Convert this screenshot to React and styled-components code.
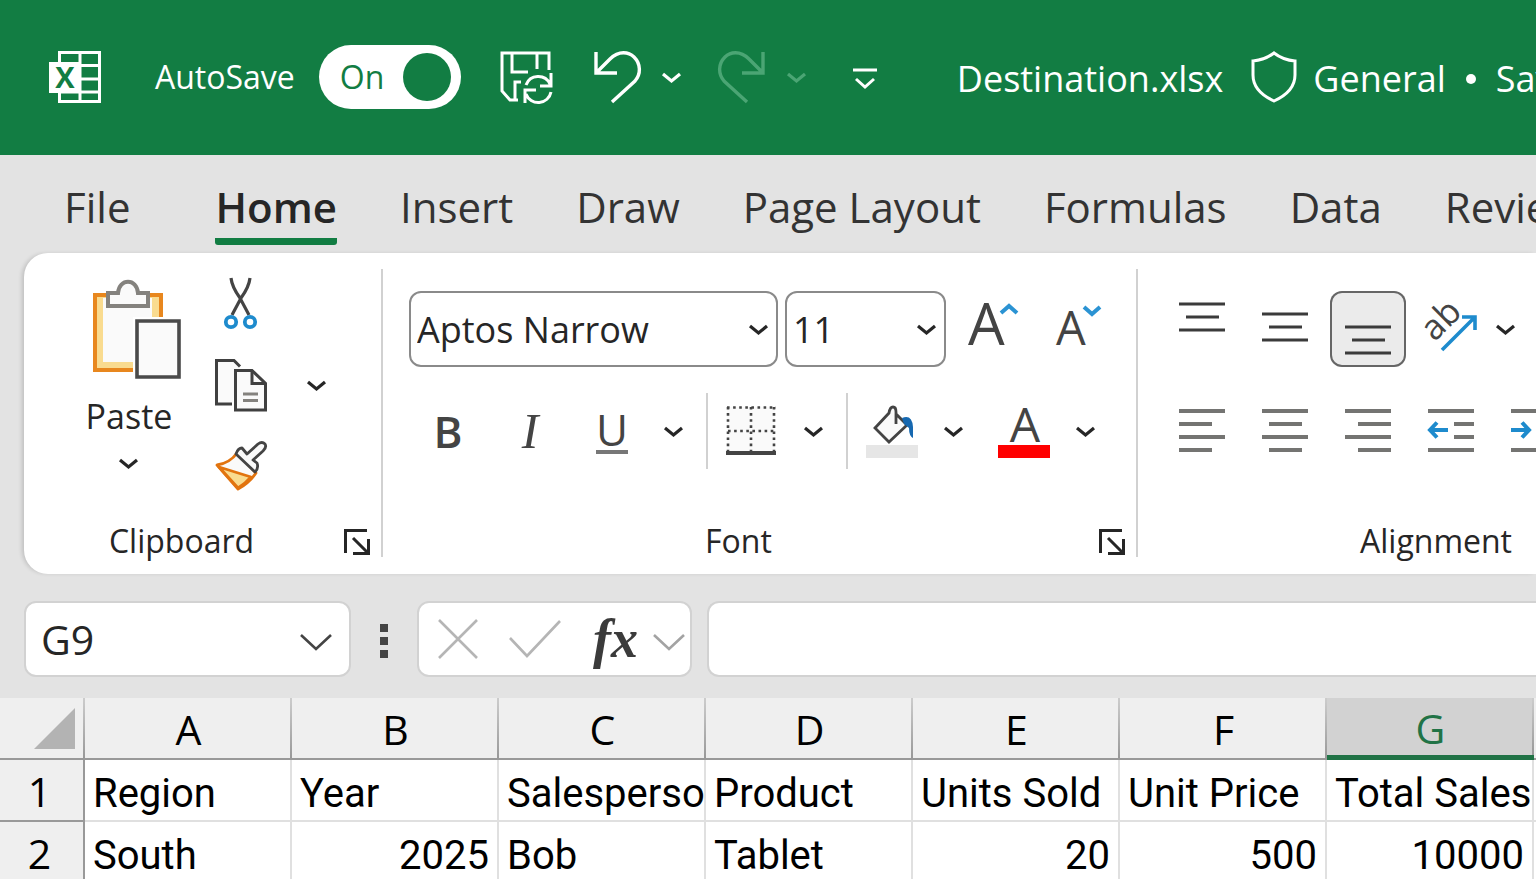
import React from 'react';
import styled, { createGlobalStyle } from 'styled-components';

const GlobalStyle = createGlobalStyle`
	* {
		box-sizing: border-box;
	}
	body {
		margin: 0;
		background: #e3e3e3;
		color: #262626;
		font-family: 'Open Sans', 'Noto Sans', sans-serif;
	}
	button, input, select {
		margin: 0;
		padding: 0;
		border: 0;
		background: none;
		color: inherit;
		font-family: inherit;
	}
	svg {
		display: block;
		flex: none;
		overflow: visible;
	}
`;

const Page = styled.div`
	display: flex;
	flex-direction: column;
	height: 100vh;
	overflow: hidden;
`;

/* title bar */

const TitleBar = styled.header`
	display: flex;
	flex: none;
	align-items: center;
	height: 155px;
	padding: 0 0 1px 49px;
	background: #127d43;
	color: white;
	white-space: nowrap;
`;

const AutoSave = styled.label`
	display: flex;
	align-items: center;
	gap: 24px;
	margin: 0 38px 0 54px;
	font-size: 32px;
	line-height: 44px;
`;

const Switch = styled.span`
	position: relative;
	display: flex;
	align-items: center;
	justify-content: space-between;
	width: 142px;
	height: 64px;
	padding: 0 10px 0 21px;
	border-radius: 32px;
	background: white;
	color: #127d43;
	input {
		position: absolute;
		inset: 0;
		opacity: 0;
	}
`;

const Knob = styled.span`
	width: 48px;
	height: 48px;
	border-radius: 50%;
	background: #127d43;
`;

const QuickAccess = styled.div`
	display: flex;
	align-items: center;
	gap: 36px;
`;

const Split = styled.div`
	display: flex;
	align-items: center;
	gap: ${(props) => props.$gap || 26}px;
`;

const IconButton = styled.button`
	display: flex;
	flex: none;
	align-items: center;
	justify-content: center;
	width: ${(props) => props.$width || 52}px;
	color: ${(props) => props.$color || 'inherit'};
`;

const FileInfo = styled.div`
	display: flex;
	align-items: center;
	margin-left: 70px;
	font-size: 36px;
	line-height: 48px;
	span {
		padding-top: 4px;
	}
	svg {
		margin: 0 16px 0 28px;
	}
`;

const Dot = styled.i`
	flex: none;
	width: 10px;
	height: 10px;
	margin: 4px 20px 0;
	border-radius: 50%;
	background: white;
`;

/* ribbon */

const Tabs = styled.nav`
	display: flex;
	flex: none;
	gap: 63px;
	height: 98px;
	padding: 24px 0 8px 64px;
	white-space: nowrap;
`;

const Tab = styled.a`
	height: 66px;
	margin-right: ${(props) => (props.$first ? 22 : 0)}px;
	border-bottom: 7px solid ${(props) => (props.$active ? '#127d43' : 'transparent')};
	border-radius: 3px;
	color: ${(props) => (props.$active ? '#262626' : '#333')};
	font-size: 42px;
	font-weight: ${(props) => (props.$active ? 600 : 400)};
	line-height: 56px;
	text-decoration: none;
`;

const Ribbon = styled.section`
	display: flex;
	flex: none;
	height: 321px;
	margin-left: 24px;
	padding: 16px 0 17px;
	border-radius: 24px 0 0 24px;
	background: white;
	box-shadow: -3px 0 4px -1px rgba(0, 0, 0, 0.16);
`;

const Group = styled.div`
	display: flex;
	flex: none;
	flex-direction: column;
	justify-content: space-between;
	min-width: ${(props) => props.$width}px;
	border-right: 2px solid #d1d1d1;
`;

const GroupFooter = styled.div`
	display: flex;
	align-items: center;
	padding-right: 6px;
	font-size: 32px;
	line-height: 32px;
	span {
		flex: 1;
		text-align: center;
	}
`;

const ClipboardTools = styled.div`
	display: flex;
	gap: 33px;
	padding: 7px 0 0 52px;
`;

const PasteButton = styled.button`
	display: flex;
	flex-direction: column;
	align-items: center;
	gap: 12px;
	padding-top: 4px;
	font-size: 34px;
	line-height: 48px;
	svg:last-child {
		margin-top: 4px;
	}
`;

const SmallTools = styled.div`
	display: grid;
	grid-template-columns: 52px 20px;
	grid-auto-rows: 54px;
	gap: 28px 40px;
`;

const ToolRows = styled.div`
	display: flex;
	flex-direction: column;
	gap: 26px;
	padding: 22px 0 0 26px;
`;

const ToolRow = styled.div`
	display: flex;
	align-items: center;
	gap: ${(props) => props.$gap}px;
	height: 76px;
	padding-left: ${(props) => props.$indent || 0}px;
`;

const Divider = styled.span`
	flex: none;
	width: 2px;
	height: 76px;
	margin: 0 18px 0 22px;
	background: #d1d1d1;
`;

const SelectBox = styled.div`
	position: relative;
	width: ${(props) => props.$width}px;
	margin-right: ${(props) => props.$after}px;
	select {
		width: 100%;
		height: 76px;
		padding-left: 6px;
		border: 2px solid #8a8a8a;
		border-radius: 12px;
		appearance: none;
		font-size: 36px;
	}
	svg {
		position: absolute;
		top: 31px;
		right: 9px;
		pointer-events: none;
	}
`;

const LetterButton = styled(IconButton)`
	color: #444;
	font-size: 44px;
	line-height: 42px;
	span {
		border-bottom: ${(props) => (props.$underline ? '4px solid #777' : '0')};
	}
`;

const Bold = styled(LetterButton)`
	font-weight: 600;
`;

const Italic = styled(LetterButton)`
	font-family: 'Liberation Serif', serif;
	font-size: 50px;
	font-style: italic;
`;

const AlignButton = styled.button`
	flex: none;
	width: 76px;
	height: 76px;
	border-radius: 12px;
	background: ${(props) => (props.$pressed ? '#ebebeb' : 'none')};
	box-shadow: ${(props) => (props.$pressed ? 'inset 0 0 0 2px #666' : 'none')};
`;

/* formula bar */

const FormulaBar = styled.div`
	display: flex;
	flex: none;
	align-items: center;
	height: 124px;
	padding: 5px 0 0 24px;
`;

const Field = styled.div`
	display: flex;
	align-items: center;
	width: ${(props) => props.$width}px;
	height: 76px;
	padding: 0 ${(props) => props.$pad || 0}px;
	border: 2px solid #d2d2d2;
	border-radius: 12px;
	background: white;
`;

const NameInput = styled.input`
	flex: 1;
	min-width: 0;
	font-size: 41px;
`;

const FormulaField = styled(Field)`
	flex: 1;
	margin-left: 15px;
	border-right: 0;
	border-radius: 12px 0 0 12px;
	input {
		width: 100%;
		font-size: 41px;
	}
`;

const Grip = styled.div`
	display: grid;
	gap: 5px;
	margin: 4px 29px 0;
	span {
		width: 8px;
		height: 8px;
		background: #444;
	}
`;

const FxButton = styled.button`
	width: 44px;
	margin: 0 16px;
	color: #3b3b3b;
	font-family: 'Liberation Serif', serif;
	font-size: 54px;
	font-style: italic;
	font-weight: 700;
	line-height: 60px;
`;

/* sheet */

const Sheet = styled.table`
	flex: none;
	width: 1741px;
	border-collapse: separate;
	border-spacing: 0;
	table-layout: fixed;
	font-family: Roboto, sans-serif;
	font-size: 40px;
	line-height: 60px;
`;

const Corner = styled.th`
	width: 85px;
	padding: 0 10px 0 0;
	border-bottom: 2px solid #999;
	background: linear-gradient(#ccc, #999) right / 2px 100% no-repeat #efefef;
	svg {
		margin-left: auto;
	}
`;

const ColumnHead = styled.th`
	height: 62px;
	padding: ${(props) => (props.$selected ? 3 : 2)}px 0 0;
	border-bottom: ${(props) => (props.$selected ? '5px solid #217346' : '2px solid #999')};
	background: linear-gradient(#ccc, #999) right / 2px 100% no-repeat
		${(props) => (props.$selected ? '#d2d2d2' : '#efefef')};
	color: ${(props) => (props.$selected ? '#217346' : '#000')};
	font-family: 'Open Sans', sans-serif;
	font-size: 41px;
	font-weight: 400;
	line-height: 54px;
`;

const RowHead = styled.th`
	padding: 2px 4px 0 0;
	border-right: 2px solid #999;
	border-bottom: 2px solid #999;
	background: #efefef;
	color: #000;
	font-family: 'Open Sans', sans-serif;
	font-size: 41px;
	font-weight: 400;
	line-height: 56px;
`;

const Cell = styled.td`
	height: 62px;
	padding: 8px 8px 0;
	border-right: 2px solid #e0e0e0;
	border-bottom: 2px solid #e0e0e0;
	background: white;
	color: #000;
	line-height: 52px;
	overflow: hidden;
	text-align: ${(props) => (props.$number ? 'right' : 'left')};
	white-space: nowrap;
`;

/* icons */

const Chevron = ({ color = 'currentColor' }) => (
	<svg width="20" height="14" fill="none" stroke={color} strokeWidth="3.2">
		<path d="M1 4 9.500 11 18 4" />
	</svg>
);

const WideChevron = ({ color }) => (
	<svg width="32" height="24" fill="none" stroke={color} strokeWidth="2.6">
		<path d="M1 8 16 22 31 8" />
	</svg>
);

const ExcelLogo = () => (
	<svg width="52" height="52" viewBox="0 0 52 52">
		<path
			d="M10.500 1.500H50.500V50.500H10.500ZM31 1V51M10 14.500H51M10 28H51M10 41H51"
			fill="none"
			stroke="white"
			strokeWidth="3"
		/>
		<path d="M0 11H30V42H0Z" fill="white" />
		<text x="16" y="37" fill="#127d43" fontSize="29" fontWeight="700" textAnchor="middle">
			X
		</text>
	</svg>
);

const SaveIcon = () => (
	<svg width="58" height="52" viewBox="-1 0 58 52" fill="none" stroke="white" strokeWidth="3">
		<path d="M49 19V2H2v38l8 9h8M12 2v19h16M37 2v16M15 49V31h6" />
		<path d="M26 34a13 13 0 0 1 24-1M51 22v13H40M51 41a13 13 0 0 1-25 2M25 52V39h11" />
	</svg>
);

const UndoIcon = () => (
	<svg width="48" height="52" fill="none" stroke="currentColor" strokeWidth="3.4">
		<path d="M3 1v21h21M3 22 17 8C26-1 36 1 41 6c7 7 7 17 1 24L19 51" />
	</svg>
);

const RedoIcon = () => (
	<svg width="48" height="52" fill="none" stroke="currentColor" strokeWidth="3.4">
		<path d="M45 1v21H24M45 22 31 8C22-1 12 1 7 6c-7 7-7 17-1 24l23 21" />
	</svg>
);

const CustomizeIcon = () => (
	<svg width="24" height="20" fill="none" stroke="white" strokeWidth="3">
		<path d="M0 3H24M3 12l9 8 9-8" />
	</svg>
);

const ShieldIcon = () => (
	<svg width="46" height="52" fill="none" stroke="white" strokeWidth="3">
		<path d="M23 2Q14 9 2 10V24C2 37 12 45 23 50 34 45 44 37 44 24V10Q32 9 23 2Z" />
	</svg>
);

const PasteIcon = () => (
	<svg width="106" height="100" viewBox="-16 0 106 100">
		<path d="M3 15H69V90H3Z" fill="#f9db8f" stroke="#e8871e" strokeWidth="4" />
		<path d="M11 18H60V82H11Z" fill="#fafafa" />
		<path
			d="M16 13H26C27-2 45-2 46 13H56V26H16Z"
			fill="#fafafa"
			stroke="#84827e"
			strokeWidth="4"
		/>
		<path d="M41 37H90V100H41Z" fill="white" />
		<path d="M45 41H87V97H45Z" fill="#fafafa" stroke="#4a4a4a" strokeWidth="3.6" />
	</svg>
);

const CutIcon = () => (
	<svg width="52" height="54" fill="none" strokeWidth="3.2">
		<path d="M16 2q1 9 9 20l9 17M35 2q-1 9-9 20l-9 17" stroke="#444" />
		<g stroke="#1e8bcd" strokeWidth="3.800">
			<circle cx="16" cy="46" r="5.200" />
			<circle cx="35" cy="46" r="5.200" />
		</g>
	</svg>
);

const CopyIcon = () => (
	<svg width="52" height="54" fill="none" stroke="#404040" strokeWidth="3">
		<path d="M17 46H1.500V2.500H19l6 6" fill="#fafafa" />
		<path d="M20.500 12.500H37l13.500 13V52h-30z" fill="#fafafa" />
		<path d="M37 12V25.500H50" />
		<path d="M28 36H43M28 42.500H43" stroke="#84827e" />
	</svg>
);

const PainterIcon = () => (
	<svg width="52" height="54" fill="none" strokeWidth="2.800" strokeLinejoin="round">
		<path d="M2 25Q15 23 22 13L41 33Q34 43 23 49Z" fill="#fafafa" stroke="#e2740f" />
		<path d="M4 27 36 37Q31 43 23 48Z" fill="#f9db8f" stroke="#e2740f" />
		<path
			d="M21 14Q23 8 27 8L32 14 43 4Q47 1 50 4 52 7 48 11L38 20 42 23Q44 28 40 32Z"
			fill="#fafafa"
			stroke="#444"
		/>
	</svg>
);

const LauncherIcon = () => (
	<svg width="26" height="24" fill="none" stroke="#262626" strokeWidth="3">
		<path d="M23 1.500H1.500V24M9 9 24 24M24.500 10V24.500H9" />
	</svg>
);

const GrowFontIcon = () => (
	<svg width="52" height="60">
		<text x="0" y="46" fill="#444" fontSize="58">
			A
		</text>
		<path d="M33 14l8-7 8 7" fill="none" stroke="#2b93d3" strokeWidth="4" />
	</svg>
);

const ShrinkFontIcon = () => (
	<svg width="52" height="60">
		<text x="0" y="46" fill="#444" fontSize="47">
			A
		</text>
		<path d="M28 8l8 7 8-7" fill="none" stroke="#2b93d3" strokeWidth="4" />
	</svg>
);

const BorderIcon = () => (
	<svg width="52" height="50" fill="none" stroke="#444" strokeWidth="2.600">
		<path d="M1 1H49V46H1Z" fill="#fafafa" stroke="none" />
		<path d="M1 1.500H50M2 25H50M2 1V46M25 1V46M48 1V46" strokeDasharray="2.600 3.500" />
		<path d="M0 47H50" strokeWidth="4" />
	</svg>
);

const FillIcon = () => (
	<svg width="52" height="52" fill="none">
		<path
			d="M9 23 23 8Q24 2 27 2 30 2 30 7V19L30 9 41 20 23 37Z"
			fill="#fafafa"
			stroke="#444"
			strokeWidth="2.800"
		/>
		<path d="M36 13Q46 9 47 22V33Q43 31 43 23L38 19Z" fill="#1668b0" />
		<path d="M0 40H52V53H0Z" fill="#e6e6e6" />
	</svg>
);

const FontColorIcon = () => (
	<svg width="52" height="52">
		<text x="27" y="37" fill="#444" fontSize="48" textAnchor="middle">
			A
		</text>
		<path d="M0 40H52V53H0Z" fill="red" />
	</svg>
);

const Lines = ({ d, thin, arrow }) => (
	<svg width="76" height="76" fill="none" stroke={thin ? '#3b3b3b' : '#747472'} strokeWidth={thin ? 3 : 4}>
		<path d={d} />
		{arrow && <path d={arrow} stroke="#1e8bcd" />}
	</svg>
);

const OrientationIcon = () => (
	<svg width="76" height="76" fill="none">
		<text
			fill="#444"
			fontSize="35"
			fontWeight="500"
			textAnchor="middle"
			transform="translate(36 37) rotate(-45)"
		>
			ab
		</text>
		<path d="M29 59 62 26M49 26H62V39" stroke="#1e8bcd" strokeWidth="3.600" />
	</svg>
);

const Caret = ({ label, color }) => (
	<IconButton $width={20} $color={color} aria-label={label}>
		<Chevron />
	</IconButton>
);

const tabs = ['File', 'Home', 'Insert', 'Draw', 'Page Layout', 'Formulas', 'Data', 'Review'];
const columns = ['A', 'B', 'C', 'D', 'E', 'F', 'G', ''];
const rows = [
	['Region', 'Year', 'Salesperson', 'Product', 'Units Sold', 'Unit Price', 'Total Sales', ''],
	['South', 2025, 'Bob', 'Tablet', 20, 500, 10000, ''],
];

const verticalAlign = [
	{ label: 'Top align', d: 'M15 13H61M22 26H55M15 39H61' },
	{ label: 'Middle align', d: 'M15 23H61M22 36H55M15 49H61' },
	{ label: 'Bottom align', d: 'M15 36H61M22 49H55M15 62H61', pressed: true },
];

const horizontalAlign = [
	{ label: 'Align left', d: 'M15 18H61M15 31H48M15 44H61M15 57H48' },
	{ label: 'Center', d: 'M15 18H61M22 31H55M15 44H61M22 57H55' },
	{ label: 'Align right', d: 'M15 18H61M28 31H61M15 44H61M28 57H61' },
	{
		label: 'Decrease indent',
		d: 'M15 18H61M41 31H61M41 44H61M15 57H61',
		arrow: 'M35 37H17M24 29.500L17 37l7 7.500',
	},
	{
		label: 'Increase indent',
		d: 'M15 18H61M41 31H61M41 44H61M15 57H61',
		arrow: 'M15 37H33M26 29.500L33 37l-7 7.500',
	},
];

const App = () => {
	return (
		<Page>
			<GlobalStyle />
			<TitleBar>
				<ExcelLogo />
				<AutoSave>
					AutoSave
					<Switch>
						<input type="checkbox" defaultChecked />
						On
						<Knob />
					</Switch>
				</AutoSave>
				<QuickAccess>
					<IconButton $width={58} aria-label="Save">
						<SaveIcon />
					</IconButton>
					<Split $gap={21}>
						<IconButton $width={48} aria-label="Undo">
							<UndoIcon />
						</IconButton>
						<Caret label="Undo history" />
					</Split>
					<Split $gap={21}>
						<IconButton $width={48} $color="#4ba574" aria-label="Redo">
							<RedoIcon />
						</IconButton>
						<Caret label="Redo history" color="#4ba574" />
					</Split>
					<IconButton $width={44} aria-label="Customize toolbar">
						<CustomizeIcon />
					</IconButton>
				</QuickAccess>
				<FileInfo>
					<span>Destination.xlsx</span>
					<ShieldIcon />
					<span>General</span>
					<Dot />
					<span>Saved</span>
				</FileInfo>
			</TitleBar>

			<Tabs>
				{tabs.map((tab, i) => (
					<Tab key={tab} href="#" $first={i === 0} $active={tab === 'Home'}>
						{tab}
					</Tab>
				))}
			</Tabs>

			<Ribbon>
				<Group $width={359}>
					<ClipboardTools>
						<PasteButton>
							<PasteIcon />
							Paste
							<Chevron />
						</PasteButton>
						<SmallTools>
							<IconButton aria-label="Cut">
								<CutIcon />
							</IconButton>
							<span />
							<IconButton aria-label="Copy">
								<CopyIcon />
							</IconButton>
							<Caret label="Copy options" />
							<IconButton aria-label="Format painter">
								<PainterIcon />
							</IconButton>
						</SmallTools>
					</ClipboardTools>
					<GroupFooter>
						<span>Clipboard</span>
						<IconButton $width={36} aria-label="Clipboard settings">
							<LauncherIcon />
						</IconButton>
					</GroupFooter>
				</Group>

				<Group $width={755}>
					<ToolRows>
						<ToolRow $gap={0}>
							<SelectBox $width={369} $after={7}>
								<select aria-label="Font name">
									<option>Aptos Narrow</option>
								</select>
								<Chevron />
							</SelectBox>
							<SelectBox $width={161} $after={22}>
								<select aria-label="Font size">
									<option>11</option>
								</select>
								<Chevron />
							</SelectBox>
							<Split $gap={36}>
								<IconButton aria-label="Increase font size">
									<GrowFontIcon />
								</IconButton>
								<IconButton aria-label="Decrease font size">
									<ShrinkFontIcon />
								</IconButton>
							</Split>
						</ToolRow>
						<ToolRow $gap={0} $indent={13}>
							<Split $gap={30}>
								<Bold>
									<span>B</span>
								</Bold>
								<Italic>
									<span>I</span>
								</Italic>
								<Split>
									<LetterButton $underline>
										<span>U</span>
									</LetterButton>
									<Caret label="Underline styles" />
								</Split>
							</Split>
							<Divider />
							<Split>
								<IconButton aria-label="Borders">
									<BorderIcon />
								</IconButton>
								<Caret label="Border styles" />
							</Split>
							<Divider />
							<Split $gap={34}>
								<Split>
									<IconButton aria-label="Fill color">
										<FillIcon />
									</IconButton>
									<Caret label="Fill colors" />
								</Split>
								<Split>
									<IconButton aria-label="Font color">
										<FontColorIcon />
									</IconButton>
									<Caret label="Font colors" />
								</Split>
							</Split>
						</ToolRow>
					</ToolRows>
					<GroupFooter>
						<span>Font</span>
						<IconButton $width={36} aria-label="Font settings">
							<LauncherIcon />
						</IconButton>
					</GroupFooter>
				</Group>

				<Group $width={604}>
					<ToolRows>
						<ToolRow $gap={7}>
							{verticalAlign.map(({ label, d, pressed }) => (
								<AlignButton key={label} aria-label={label} $pressed={pressed}>
									<Lines d={d} thin />
								</AlignButton>
							))}
							<AlignButton aria-label="Orientation">
								<OrientationIcon />
							</AlignButton>
							<Caret label="Orientation options" />
						</ToolRow>
						<ToolRow $gap={7}>
							{horizontalAlign.map(({ label, d, arrow }) => (
								<AlignButton key={label} aria-label={label}>
									<Lines d={d} arrow={arrow} />
								</AlignButton>
							))}
						</ToolRow>
					</ToolRows>
					<GroupFooter>
						<span>Alignment</span>
					</GroupFooter>
				</Group>
			</Ribbon>

			<FormulaBar>
				<Field $width={327} $pad={15}>
					<NameInput aria-label="Name box" defaultValue="G9" />
					<IconButton $width={36} aria-label="Names">
						<WideChevron color="#444" />
					</IconButton>
				</Field>
				<Grip>
					<span />
					<span />
					<span />
				</Grip>
				<Field $width={275} $pad={4}>
					<IconButton $width={70} aria-label="Cancel">
						<svg width="40" height="40" fill="none" stroke="#b5b5b5" strokeWidth="2.600">
							<path d="M1 1 39 39M39 1 1 39" />
						</svg>
					</IconButton>
					<IconButton $width={84} aria-label="Enter">
						<svg width="52" height="38" fill="none" stroke="#b5b5b5" strokeWidth="2.600">
							<path d="M1 18 18 36 51 1" />
						</svg>
					</IconButton>
					<FxButton>fx</FxButton>
					<IconButton $width={32} aria-label="Functions">
						<WideChevron color="#a3a3a3" />
					</IconButton>
				</Field>
				<FormulaField>
					<input aria-label="Formula" />
				</FormulaField>
			</FormulaBar>

			<Sheet>
				<thead>
					<tr>
						<Corner>
							<svg width="41" height="41" fill="#b3b3b3">
								<path d="M41 0V41H0Z" />
							</svg>
						</Corner>
						{columns.map((column) => (
							<ColumnHead key={column} $selected={column === 'G'}>
								{column}
							</ColumnHead>
						))}
					</tr>
				</thead>
				<tbody>
					{rows.map((row, i) => (
						<tr key={row[0]}>
							<RowHead scope="row">{i + 1}</RowHead>
							{row.map((value, j) => (
								<Cell key={columns[j]} $number={typeof value === 'number'}>
									{value}
								</Cell>
							))}
						</tr>
					))}
				</tbody>
			</Sheet>
		</Page>
	);
};

export default App;
